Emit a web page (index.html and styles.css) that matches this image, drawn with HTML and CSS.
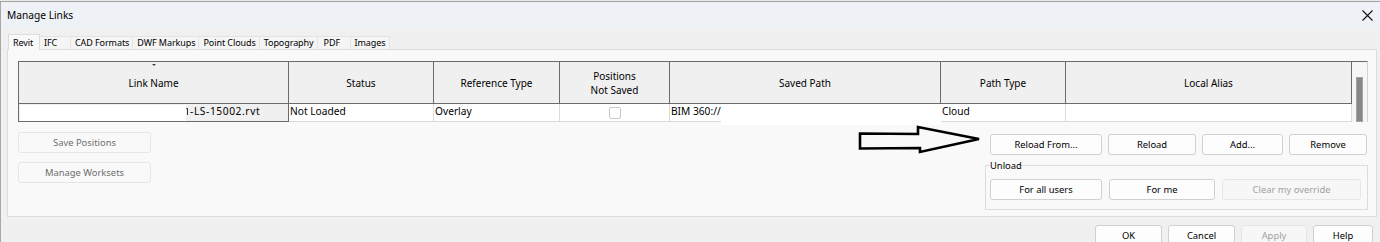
FILE: index.html
```html
<!DOCTYPE html>
<html lang="en">
<head>
<meta charset="utf-8">
<title>Manage Links</title>
<link rel="stylesheet" href="styles.css">
</head>
<body>
<div class="window">
  <div class="titlebar">
    <span class="title">Manage Links</span>
    <svg class="close" width="11" height="11" viewBox="0 0 11 11" aria-label="Close">
      <path d="M0.5 0.5 L10.5 10.5 M10.5 0.5 L0.5 10.5" stroke="#111" stroke-width="1.1" fill="none"/>
    </svg>
  </div>

  <div class="tabs">
    <div class="tab active">Revit</div>
    <div class="tab">IFC</div>
    <div class="tab">CAD Formats</div>
    <div class="tab">DWF Markups</div>
    <div class="tab">Point Clouds</div>
    <div class="tab">Topography</div>
    <div class="tab tab-wide">PDF</div>
    <div class="tab">Images</div>
  </div>

  <div class="panel">
    <div class="grid">
      <div class="table">
        <div class="hcell sorted">Link Name<span class="sort"></span></div>
        <div class="hcell">Status</div>
        <div class="hcell">Reference Type</div>
        <div class="hcell">Positions<br>Not Saved</div>
        <div class="hcell">Saved Path</div>
        <div class="hcell">Path Type</div>
        <div class="hcell">Local Alias</div>

        <div class="dcell rowhead"><span class="redact-name"></span><span class="sliver"></span><span class="fname">-LS-15002.rvt</span></div>
        <div class="dcell">Not Loaded</div>
        <div class="dcell">Overlay</div>
        <div class="dcell center"><span class="checkbox"></span></div>
        <div class="dcell">BIM 360://</div>
        <div class="dcell">Cloud</div>
        <div class="dcell"></div>
        <div class="redact-path"></div>
      </div>
      <div class="scroll"><div class="thumb"></div></div>
    </div>

    <div class="lower">
      <div class="left-actions">
        <button class="btn btn-muted" disabled>Save Positions</button>
        <button class="btn btn-muted" disabled>Manage Worksets</button>
      </div>
      <div class="right-actions">
        <div class="row-btns">
          <button class="btn">Reload From...</button>
          <button class="btn">Reload</button>
          <button class="btn">Add...</button>
          <button class="btn">Remove</button>
        </div>
        <fieldset class="unload">
          <legend>Unload</legend>
          <div class="unload-btns">
            <button class="btn">For all users</button>
            <button class="btn">For me</button>
            <button class="btn btn-disabled" disabled>Clear my override</button>
          </div>
        </fieldset>
      </div>
    </div>

    <svg class="arrow" width="126" height="32" viewBox="0 0 126 32">
      <path d="M2 9.5 L60 10 L60 3 L121 15 L62 28 L62 24 L2 24.5 Z" fill="none" stroke="#000" stroke-width="2.6" stroke-linejoin="miter"/>
    </svg>
  </div>

  <div class="footer">
    <button class="btn fb-ok">OK</button>
    <button class="btn fb-cancel">Cancel</button>
    <button class="btn btn-disabled fb-apply" disabled>Apply</button>
    <button class="btn fb-help">Help</button>
  </div>
</div>
</body>
</html>
```

FILE: styles.css
```css
* { box-sizing: border-box; }

html, body {
  margin: 0;
  padding: 0;
}

body {
  width: 1380px;
  height: 242px;
  overflow: hidden;
  background: #e9ece8;
  font-family: "Noto Sans", "Open Sans", sans-serif;
  color: #000;
}

.window {
  margin-top: 1px;
  width: 1380px;
  height: 241px;
  background: #f0f0f0;
  border-top: 1px solid #a3a3a3;
  border-left: 1px solid #a8a8a8;
}

/* Title bar */
.titlebar {
  height: 26px;
  background: #eef2f7;
  display: flex;
  align-items: center;
  padding: 0 7px 0 6px;
}

.title {
  font-size: 10.2px;
  line-height: 14px;
  color: #000;
}

.close {
  margin-left: auto;
  display: block;
}

/* Tabs */
.tabs {
  height: 21px;
  display: flex;
  align-items: flex-end;
  padding-left: 7px;
}

.tab {
  height: 13px;
  min-width: 31px;
  padding: 0 3px 0 4px;
  font-size: 9px;
  letter-spacing: -0.08px;
  line-height: 12px;
  white-space: nowrap;
  background: #f5f5f5;
  border-top: 1px solid #e3e3e3;
  border-right: 1px solid #e3e3e3;
  color: #000;
}

.tab-wide {
  min-width: 33px;
  padding-left: 6px;
}

.tab.active {
  height: 16px;
  min-width: 32px;
  padding-top: 2px;
  margin-bottom: -1px;
  background: #f9f9f9;
  border: 1px solid #dcdcdc;
  border-bottom: none;
  position: relative;
  z-index: 1;
}

/* Panel */
.panel {
  position: relative;
  margin-left: 6px;
  width: 1370px;
  height: 168px;
  background: #f9f9f9;
  border: 1px solid #dcdcdc;
  padding: 11px 8px 0 10px;
}

/* Grid */
.grid {
  width: 1350px;
  height: 61px;
  display: flex;
  border-top: 1px solid #6b6b6b;
  border-left: 1px solid #6b6b6b;
  border-right: 1px solid #d3d3d3;
}

.table {
  position: relative;
  display: grid;
  grid-template-columns: 270px 145px 126px 110px 271px 125px 286px;
  grid-template-rows: 42px 18px;
}

.hcell {
  position: relative;
  background: #f0f0f0;
  border-right: 1px solid #6b6b6b;
  border-bottom: 1px solid #6b6b6b;
  display: flex;
  align-items: center;
  justify-content: center;
  text-align: center;
  font-size: 10px;
  line-height: 14px;
  color: #000;
}

.sort {
  position: absolute;
  top: 2px;
  left: 50%;
  margin-left: -2px;
  width: 0;
  height: 0;
  border-left: 2px solid transparent;
  border-right: 2px solid transparent;
  border-top: 2px solid #444;
}

.dcell {
  background: #fff;
  border-right: 1px solid #dadada;
  border-bottom: 1px solid #dadada;
  font-size: 10.2px;
  line-height: 14px;
  padding: 0 0 0 1px;
  white-space: nowrap;
  overflow: hidden;
  color: #000;
}

.dcell.center {
  display: flex;
  align-items: center;
  justify-content: center;
  padding: 0;
}

.dcell.rowhead {
  background: #f0f0f0;
  border-right: 1px solid #6b6b6b;
  border-bottom: 1px solid #6b6b6b;
  display: flex;
  align-items: flex-start;
  padding: 0;
}

.redact-name {
  display: block;
  width: 166px;
  height: 16px;
  margin: 1px 0 0 1px;
  background: #fff;
}

.sliver {
  display: block;
  width: 2px;
  height: 7px;
  margin: 4px 0 0 0;
  border-right: 1px solid #333;
  border-top: 1px solid #666;
}

.fname {
  margin-left: 2px;
  letter-spacing: 0.6px;
}

.checkbox {
  display: block;
  width: 12px;
  height: 12px;
  border: 1px solid #c9c9c9;
  border-radius: 2px;
  background: #fff;
}

.redact-path {
  position: absolute;
  left: 702px;
  top: 42px;
  width: 220px;
  height: 21px;
  background: #fff;
}

.scroll {
  width: 15px;
  background: #f6f6f6;
}

.thumb {
  width: 7px;
  height: 45px;
  margin: 15px 0 0 4px;
  background: #888;
  border: 1px solid #a2a2a2;
}

/* Lower area */
.lower {
  display: flex;
  justify-content: space-between;
  align-items: flex-start;
}

.left-actions {
  padding-top: 10px;
  display: flex;
  flex-direction: column;
  gap: 9px;
}

.left-actions .btn {
  width: 133px;
}

.right-actions {
  padding-top: 12px;
  width: 383px;
}

.row-btns {
  display: grid;
  grid-template-columns: 112px 88px 81px 78px;
  column-gap: 6px;
  padding-left: 5px;
}

.unload {
  margin: 4px 0 0 0;
  padding: 7px 0 9px 4px;
  border: 1px solid #dcdcdc;
  min-width: 0;
}

.unload legend {
  padding: 0;
  font-size: 9.4px;
  line-height: 13px;
  color: #000;
}

.unload-btns {
  display: grid;
  grid-template-columns: 112px 106px 139px;
  column-gap: 7px;
}

/* Buttons */
.btn {
  height: 21px;
  padding: 0;
  margin: 0;
  font-family: inherit;
  font-size: 9.4px;
  line-height: 12px;
  color: #000;
  background: #fdfdfd;
  border: 1px solid #d0d0d0;
  border-radius: 3px;
  display: flex;
  align-items: center;
  justify-content: center;
  white-space: nowrap;
}

.btn-muted {
  color: #6e6e6e;
  background: #f9f9f9;
  border-color: #e6e6e6;
}

.btn-disabled {
  color: #a0a0a0;
  background: #f7f7f7;
  border-color: #e6e6e6;
}

.arrow {
  position: absolute;
  left: 850px;
  top: 74px;
}

/* Footer */
.footer {
  margin-top: 8px;
  display: flex;
  justify-content: flex-end;
  gap: 6px;
  padding-right: 7px;
}

.fb-ok, .fb-cancel { width: 67px; }
.fb-apply { width: 66px; }
.fb-help { width: 60px; }
```
